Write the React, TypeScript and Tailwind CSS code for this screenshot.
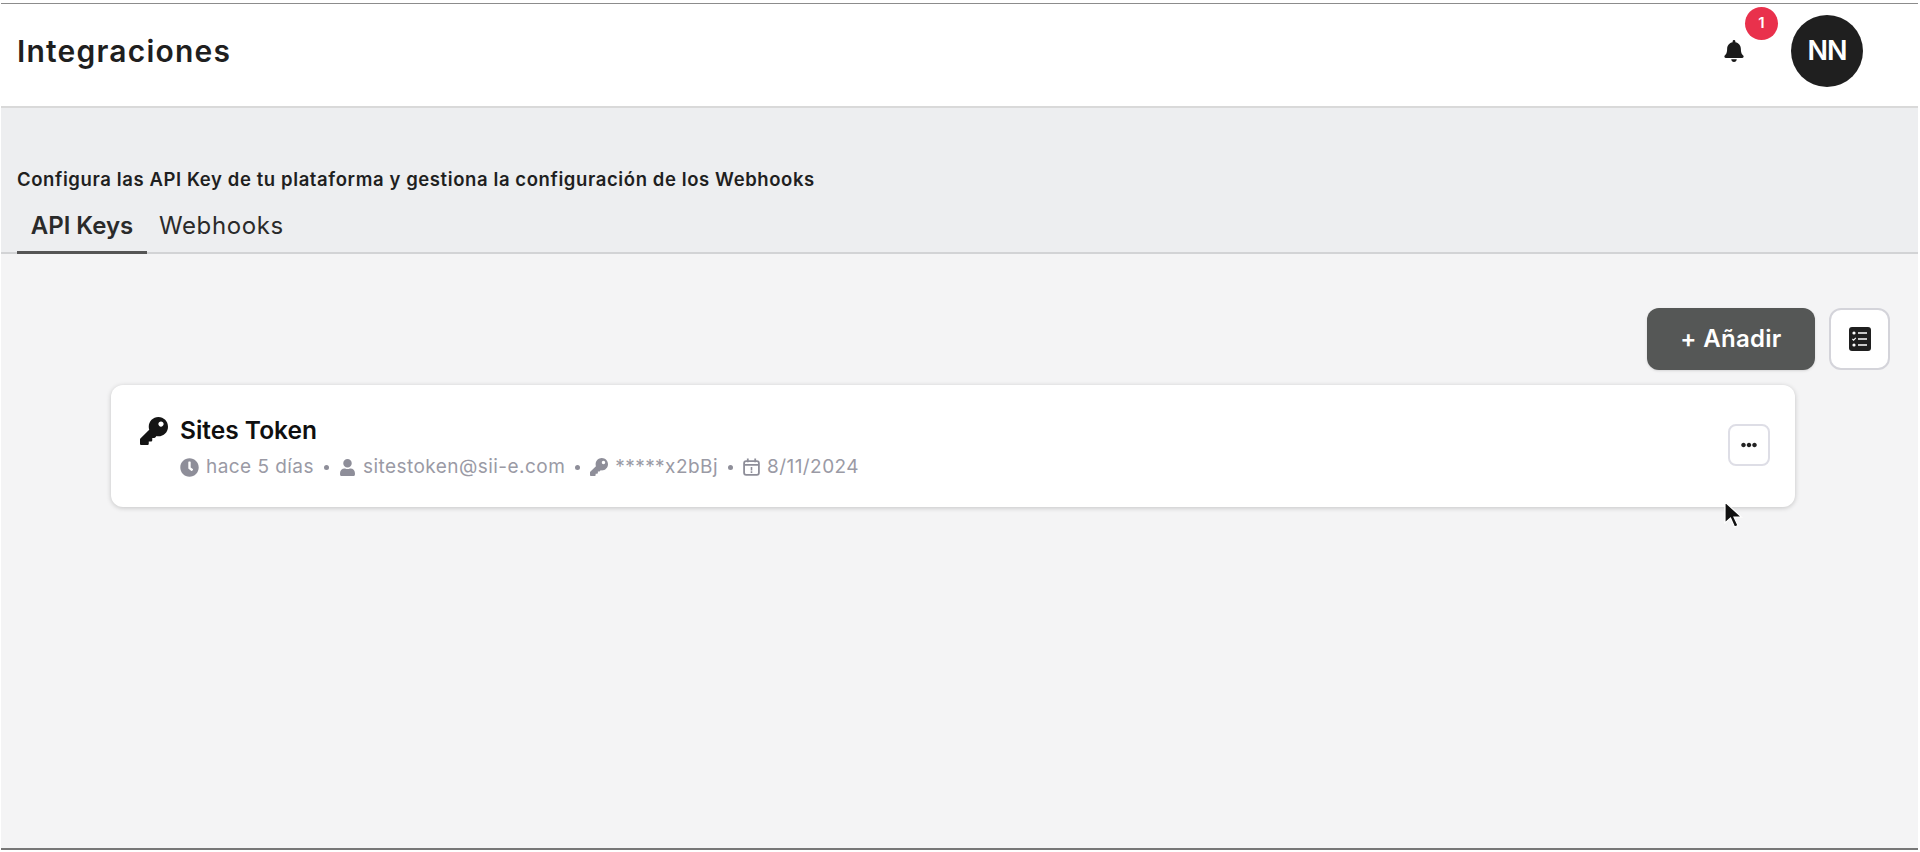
import React from 'react';
import { FaBell, FaKey, FaClock, FaUser, FaEllipsisH } from 'react-icons/fa';

const ClipboardList = () => (
  <svg width="22" height="24" viewBox="0 0 22 24">
    <rect x="0" y="0" width="22" height="24" rx="3" fill="#1f1f1f" />
    <circle cx="5" cy="6" r="1.6" fill="#fff" />
    <path d="M9 6h9M9 12h9M9 18h9" stroke="#fff" strokeWidth="1.5" />
    <path d="M3.4 12l1.2 1.2 2.2-2.4" stroke="#fff" strokeWidth="1.1" fill="none" />
    <circle cx="5" cy="18" r="1.6" fill="#fff" />
  </svg>
);

const CalendarAlert = () => (
  <svg width="17" height="18" viewBox="0 0 16 17" fill="none">
    <rect x="1" y="3" width="14" height="13" rx="2" stroke="#8e8e99" strokeWidth="1.7" />
    <path d="M1 6.5h14M4.5 0.5v3.5M11.500 0.5v3.5" stroke="#8e8e99" strokeWidth="1.7" />
    <path d="M8 8.500v3.200M8 12.600v1.500" stroke="#8e8e99" strokeWidth="1.500" />
  </svg>
);

const Cursor = () => (
  <svg width="20" height="29" viewBox="0 0 20 29" className="absolute left-[1723px] top-[501px]">
    <path d="M2 1v21l5.500-5 4 9 3.500-1.500-4-8.500h7.500z" fill="#111" stroke="#fff" strokeWidth="1.200" />
  </svg>
);

const Dot = () => <span className="w-[5px] h-[5px] rounded-full bg-[#8e8e99] mx-[10px]" />;

export default function App() {
  return (
    <div className="relative h-[852px] w-[1920px] overflow-hidden bg-white pt-[3px] pb-[2px] pr-[2px] pl-[1px] font-['Inter',sans-serif]">
      <div className="flex h-full flex-col border-t border-b-2 border-t-[#8c8c8c] border-b-[#777]">
        {/* Header */}
        <header className="flex h-[104px] shrink-0 items-center justify-between border-b-2 border-[#d9d9d9] bg-white pb-[8px] pl-[16px] pr-[55px]">
          <h1 className="text-[30px] font-semibold tracking-[1.2px] text-[#1f1f1f]">Integraciones</h1>
          <div className="relative flex items-center">
            <FaBell className="mr-[46px] text-[22px] text-[#1a1a1a]" />
            <span className="absolute left-[22px] top-[-8px] flex h-[33px] w-[33px] items-center justify-center rounded-full bg-[#e9314c] text-[15px] font-semibold text-white">1</span>
            <div className="flex h-[72px] w-[72px] items-center justify-center rounded-full bg-[#1f1f1f] text-[27px] font-semibold tracking-[-1px] text-white">NN</div>
          </div>
        </header>

        {/* Title and tabs */}
        <section className="flex h-[146px] shrink-0 flex-col justify-end border-b-2 border-[#d2d3d5] bg-[#edeef0] pl-[16px]">
          <p className="text-[18.500px] leading-[26px] font-semibold tracking-[0.6px] text-[#1f1f1f]">Configura las API Key de tu plataforma y gestiona la configuración de los Webhooks</p>
          <div className="-mb-[2px] mt-[16px] flex">
            <div className="flex h-[46px] w-[130px] items-start justify-center border-b-[3px] border-[#555] text-[24px] font-semibold text-[#2a2a2a]">API Keys</div>
            <div className="ml-[12px] h-[46px] text-[24px] tracking-[0.6px] text-[#2a2a2a]">Webhooks</div>
          </div>
        </section>

        {/* Content */}
        <main className="flex-1 bg-[#f4f4f5]">
          <div className="flex justify-end gap-[14px] pt-[54px] pr-[28px]">
            <button className="flex h-[62px] w-[168px] items-center justify-center rounded-[12px] bg-[#555756] text-[24px] font-semibold tracking-[0.3px] text-white shadow-sm">+ Añadir</button>
            <button className="flex h-[62px] w-[61px] items-center justify-center rounded-[12px] border-2 border-[#d4d4da] bg-white"><ClipboardList /></button>
          </div>
          <div className="mt-[15px] ml-[110px] flex h-[122px] w-[1684px] items-center justify-between rounded-[12px] bg-white pr-[25px] pl-[29px] shadow-[0_1px_5px_rgba(0,0,0,0.2)]">
            <div className="flex flex-col pt-[2px]">
              <div className="flex items-center">
                <FaKey className="text-[28px] text-[#141414]" />
                <span className="ml-[12px] text-[24.500px] font-semibold text-[#0f0f0f]">Sites Token</span>
              </div>
              <div className="mt-[4px] ml-[40px] flex items-center text-[19px] tracking-[0.45px] text-[#9a9aa5]">
                <FaClock className="mr-[7px] text-[19px] text-[#8e8e99]" />
                <span>hace 5 días</span>
                <Dot />
                <FaUser className="mr-[7px] text-[17px] text-[#8e8e99]" />
                <span>sitestoken@sii-e.com</span>
                <Dot />
                <FaKey className="mr-[7px] text-[18px] text-[#8e8e99]" />
                <span>*****x2bBj</span>
                <Dot />
                <span className="mr-[7px] flex"><CalendarAlert /></span>
                <span>8/11/2024</span>
              </div>
            </div>
            <button className="-mt-[2px] flex h-[42px] w-[42px] items-center justify-center rounded-[8px] border-2 border-[#dedee6] bg-white"><FaEllipsisH className="text-[16px] text-[#222]" /></button>
          </div>
        </main>
      </div>
      <Cursor />
    </div>
  );
}
